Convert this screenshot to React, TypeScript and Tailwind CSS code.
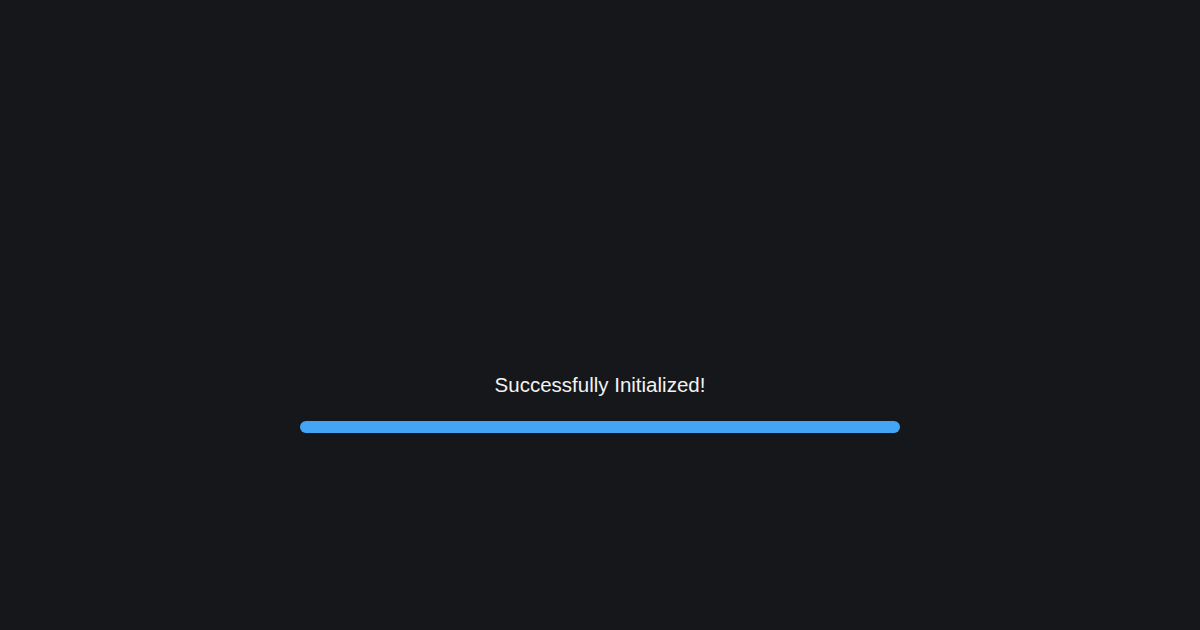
export default function App() {
  return (
    <div className="h-[630px] w-full bg-[#16171a] flex flex-col items-center pt-[371px] font-['Liberation_Sans',Arial,sans-serif]">
      <p className="text-[20.5px] leading-[28px] text-[#f2f2f2]">Successfully Initialized!</p>
      <div className="mt-[22px] h-[12px] w-[600px] rounded-full bg-[#42a5f5]" />
    </div>
  )
}
